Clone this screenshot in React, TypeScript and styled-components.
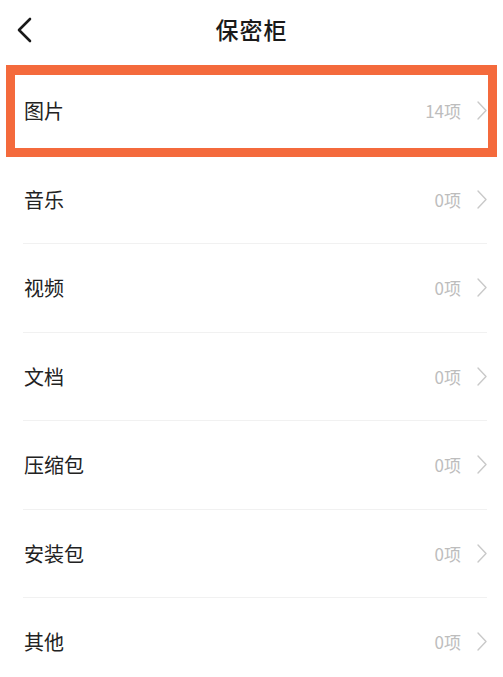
import styled, { createGlobalStyle } from "styled-components";

const GlobalStyle = createGlobalStyle`
  html, body {
    margin: 0;
    padding: 0;
    background: #ffffff;
  }
  body {
    font-family: "Noto Sans CJK SC", "Noto Sans", sans-serif;
    color: #222222;
  }
`;

const Page = styled.div`
  width: 503px;
  min-height: 677px;
  background: #ffffff;
  overflow: hidden;
`;

const Header = styled.header`
  position: relative;
  height: 67px;
  display: flex;
  align-items: flex-start;
  justify-content: center;
`;

const BackButton = styled.button`
  position: absolute;
  left: 12px;
  top: 16px;
  width: 24px;
  height: 28px;
  padding: 0;
  border: none;
  background: none;
  display: flex;
  align-items: center;
  justify-content: center;
`;

const Title = styled.h1`
  margin: 0;
  padding-top: 12px;
  font-size: 23px;
  line-height: 34px;
  font-weight: 500;
  color: #1a1a1a;
  letter-spacing: 1px;
`;

const List = styled.ul`
  list-style: none;
  margin: 0 16px 0 23px;
  padding: 0;
`;

const Row = styled.li`
  position: relative;
  height: 87.5px;
  display: flex;
  align-items: center;
  border-bottom: 1px solid #f1f1f1;
  &:last-child {
    border-bottom: none;
  }
`;

const Label = styled.span`
  flex: 1;
  padding-left: 1px;
  font-size: 20px;
  color: #222222;
`;

const Count = styled.span`
  font-size: 17px;
  color: #bdbdbd;
  margin-right: 16px;
`;

const Highlight = styled.div`
  position: absolute;
  left: -17px;
  right: -10px;
  top: -2px;
  bottom: -2px;
  border: 9px solid #f46a3c;
  border-top-width: 10px;
  pointer-events: none;
`;

const items = [
  { label: "图片", count: 14 },
  { label: "音乐", count: 0 },
  { label: "视频", count: 0 },
  { label: "文档", count: 0 },
  { label: "压缩包", count: 0 },
  { label: "安装包", count: 0 },
  { label: "其他", count: 0 },
];

function Chevron() {
  return (
    <svg width="10" height="19" viewBox="0 0 10 19" fill="none">
      <path d="M1 1 L9 9.5 L1 18" stroke="#c9c9c9" strokeWidth="1.4" strokeLinecap="round" strokeLinejoin="round" />
    </svg>
  );
}

export default function App() {
  return (
    <Page>
      <GlobalStyle />
      <Header>
        <BackButton aria-label="返回">
          <svg width="18" height="26" viewBox="0 0 18 26" fill="none">
            <path d="M15 2 L4 13 L15 24" stroke="#1a1a1a" strokeWidth="2.6" strokeLinecap="round" strokeLinejoin="round" />
          </svg>
        </BackButton>
        <Title>保密柜</Title>
      </Header>
      <List>
        {items.map((item, i) => (
          <Row key={item.label}>
            <Label>{item.label}</Label>
            <Count>{item.count}项</Count>
            <Chevron />
            {i === 0 && <Highlight />}
          </Row>
        ))}
      </List>
    </Page>
  );
}
